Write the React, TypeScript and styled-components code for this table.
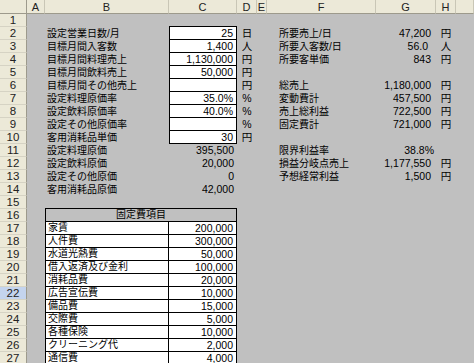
import React from 'react';
import styled, {createGlobalStyle, css} from 'styled-components';

const GlobalStyle = createGlobalStyle`
  html, body {
    margin: 0;
    padding: 0;
    background: #c0c0c0;
  }
  body {
    font-family: "Liberation Sans", "Noto Sans CJK JP", sans-serif;
  }
`;

const Sheet = styled.div`
  display: grid;
  grid-template-columns: 27px 18px 124px 68px 20px 10px 109px 60px 20px 1fr;
  grid-template-rows: 14px repeat(27, 13px);
  width: 474px;
  height: 363px;
  overflow: hidden;
  background: #c0c0c0;
  font-size: 10.5px;
  color: #000;
`;

const Corner = styled.div`
  grid-column: 1;
  grid-row: 1;
  background: #ece9d8;
  border-right: 1px solid #9d9a8c;
  border-bottom: 1px solid #9d9a8c;
  box-sizing: border-box;
`;

const ColHead = styled.div<{$col: number}>`
  grid-column: ${({$col}) => $col};
  grid-row: 1;
  background: #ece9d8;
  border-right: 1px solid #c9c6b6;
  border-bottom: 1px solid #9d9a8c;
  box-sizing: border-box;
  text-align: center;
  font-size: 11px;
  line-height: 14px;
  color: #222;
`;

const RowHead = styled.div<{$row: number; $selected?: boolean}>`
  grid-column: 1;
  grid-row: ${({$row}) => $row + 1};
  background: ${({$selected}) => ($selected ? '#c4d4ee' : '#ece9d8')};
  border-right: 1px solid #9d9a8c;
  border-bottom: 1px solid #d6d3c4;
  box-sizing: border-box;
  text-align: center;
  font-size: 11.5px;
  line-height: 13px;
  color: #222;
`;

type Align = 'left' | 'right' | 'center';

const Cell = styled.div<{
  $row: number;
  $col: number;
  $span?: number;
  $align?: Align;
  $pad?: number;
  $label?: boolean;
  $boxed?: boolean;
  $joinLeft?: boolean;
  $fill?: string;
}>`
  grid-column: ${({$col, $span}) => `${$col} / span ${$span ?? 1}`};
  grid-row: ${({$row}) => $row + 1};
  box-sizing: border-box;
  white-space: nowrap;
  overflow: visible;
  text-align: ${({$align}) => $align ?? 'left'};
  padding: ${({$align, $pad}) =>
    $align === 'right' ? `0 ${$pad ?? 3}px 0 0` : `0 0 0 ${$pad ?? 2}px`};
  font-size: ${({$label}) => ($label ? '10px' : '10.5px')};
  line-height: 13px;

  ${({$boxed, $fill, $joinLeft}) =>
    $boxed &&
    css`
      background: ${$fill ?? '#fff'};
      border: 1px solid #000;
      margin-top: -1px;
      margin-left: ${$joinLeft ? '-1px' : '0'};
      line-height: 12px;
    `}
`;

const columns = ['A', 'B', 'C', 'D', 'E', 'F', 'G', 'H', ''];

type Line = {
  row: number;
  b?: string;
  c?: string;
  box?: boolean;
  d?: string;
  f?: string;
  g?: string;
  gPad?: number;
  h?: string;
};

const inputs: Line[] = [
  {row: 2, b: '設定営業日数/月', c: '25', box: true, d: '日', f: '所要売上/日', g: '47,200', h: '円'},
  {row: 3, b: '目標月間入客数', c: '1,400', box: true, d: '人', f: '所要入客数/日', g: '56.0', gPad: 8, h: '人'},
  {row: 4, b: '目標月間料理売上', c: '1,130,000', box: true, d: '円', f: '所要客単価', g: '843', h: '円'},
  {row: 5, b: '目標月間飲料売上', c: '50,000', box: true, d: '円'},
  {row: 6, b: '目標月間その他売上', c: '', box: true, d: '円', f: '総売上', g: '1,180,000', h: '円'},
  {row: 7, b: '設定料理原価率', c: '35.0%', box: true, d: '%', f: '変動費計', g: '457,500', h: '円'},
  {row: 8, b: '設定飲料原価率', c: '40.0%', box: true, d: '%', f: '売上総利益', g: '722,500', h: '円'},
  {row: 9, b: '設定その他原価率', c: '', box: true, d: '%', f: '固定費計', g: '721,000', h: '円'},
  {row: 10, b: '客用消耗品単価', c: '30', box: true, d: '円'},
  {row: 11, b: '設定料理原価', c: '395,500', f: '限界利益率', g: '38.8%', gPad: 2},
  {row: 12, b: '設定飲料原価', c: '20,000', f: '損益分岐点売上', g: '1,177,550', h: '円'},
  {row: 13, b: '設定その他原価', c: '0', f: '予想経常利益', g: '1,500', h: '円'},
  {row: 14, b: '客用消耗品原価', c: '42,000'},
];

const fixedCosts: [string, string][] = [
  ['家賃', '200,000'],
  ['人件費', '300,000'],
  ['水道光熱費', '50,000'],
  ['借入返済及び金利', '100,000'],
  ['消耗品費', '20,000'],
  ['広告宣伝費', '10,000'],
  ['備品費', '15,000'],
  ['交際費', '5,000'],
  ['各種保険', '10,000'],
  ['クリーニング代', '2,000'],
  ['通信費', '4,000'],
];

const App = () => {
  const rows = Array.from({length: 27}, (_, i) => i + 1);

  return (
    <>
      <GlobalStyle />
      <Sheet>
        <Corner />
        {columns.map((name, i) => (
          <ColHead key={i} $col={i + 2}>
            {name}
          </ColHead>
        ))}
        {rows.map((r) => (
          <RowHead key={r} $row={r} $selected={r === 22}>
            {r}
          </RowHead>
        ))}

        {inputs.map((l) => (
          <React.Fragment key={l.row}>
            <Cell $row={l.row} $col={3} $label>
              {l.b}
            </Cell>
            <Cell $row={l.row} $col={4} $align="right" $boxed={l.box}>
              {l.c}
            </Cell>
            {l.d && (
              <Cell $row={l.row} $col={5} $align="center" $pad={0}>
                {l.d}
              </Cell>
            )}
            {l.f && (
              <Cell $row={l.row} $col={7} $label $pad={12}>
                {l.f}
              </Cell>
            )}
            {l.g && (
              <Cell $row={l.row} $col={8} $align="right" $pad={l.gPad ?? 5}>
                {l.g}
              </Cell>
            )}
            {l.h && (
              <Cell $row={l.row} $col={9} $align="center" $pad={0}>
                {l.h}
              </Cell>
            )}
          </React.Fragment>
        ))}

        <Cell $row={16} $col={3} $span={2} $align="center" $pad={0} $label $boxed $fill="#c0c0c0">
          固定費項目
        </Cell>
        {fixedCosts.map(([name, amount], i) => (
          <React.Fragment key={name}>
            <Cell $row={17 + i} $col={3} $label $boxed>
              {name}
            </Cell>
            <Cell $row={17 + i} $col={4} $align="right" $boxed $joinLeft>
              {amount}
            </Cell>
          </React.Fragment>
        ))}
      </Sheet>
    </>
  );
};

export default App;
